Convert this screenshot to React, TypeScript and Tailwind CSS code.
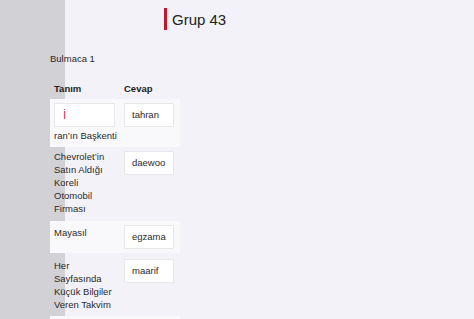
import React from 'react';

type Row = {
  lines: string[];
  cevap: string;
  first?: boolean;
  rowClass: string;
  textClass: string;
  boxClass: string;
};

const rows: Row[] = [
  {
    lines: ['ran’ın Başkenti'],
    cevap: 'tahran',
    first: true,
    rowClass: 'bg-[#f9f9fb] pt-[4px] pb-[5px]',
    textClass: 'mt-0',
    boxClass: 'mt-0',
  },
  {
    lines: ['Chevrolet’in', 'Satın Aldığı', 'Koreli', 'Otomobil', 'Firması'],
    cevap: 'daewoo',
    rowClass: 'pt-[3px] pb-[6px]',
    textClass: 'mt-0',
    boxClass: 'mt-[1px]',
  },
  {
    lines: ['Mayasıl'],
    cevap: 'egzama',
    rowClass: 'bg-[#f9f9fb] pt-[4px] pb-[4px]',
    textClass: 'mt-[1px]',
    boxClass: 'mt-0',
  },
  {
    lines: ['Her', 'Sayfasında', 'Küçük Bilgiler', 'Veren Takvim'],
    cevap: 'maarif',
    rowClass: 'pt-[6px] pb-[5px]',
    textClass: 'mt-0',
    boxClass: 'mt-0',
  },
];

export default function App() {
  return (
    <div className="min-h-screen bg-[linear-gradient(to_right,#d1d1d6_65px,#f2f2f8_65px)] font-['Liberation_Sans',Arial,sans-serif] text-[#2b2b2b]">
      {/* Header */}
      <div className="flex items-center pl-[164px] pt-[8px]">
        <div className="w-[3px] h-[22px] bg-[#c3172f]" />
        <h1 className="ml-[5px] text-[15px] text-[#222] leading-none">Grup 43</h1>
      </div>

      {/* Content */}
      <div className="pl-[50px] pt-[22px]">
        <p className="text-[9.5px] leading-[13px]">Bulmaca 1</p>

        <div className="mt-[17px] w-[130px]">
          <div className="flex px-[4px] pb-[4px] text-[9.5px] font-bold leading-[13px] text-[#222]">
            <span className="w-[70px]">Tanım</span>
            <span>Cevap</span>
          </div>

          {rows.map((row) => (
            <div key={row.cevap} className={`flex items-start px-[4px] ${row.rowClass}`}>
              <div className={`w-[62px] mr-[8px] text-[9.5px] leading-[13px] ${row.textClass}`}>
                {row.first && (
                  <div className="h-[24px] w-[61px] bg-white border border-[#e7e7ec] flex items-center pl-[8px] text-[11px] text-[#d42a3c] mb-[2px]">
                    İ
                  </div>
                )}
                {row.lines.map((line) => (
                  <div key={line} className="whitespace-nowrap">
                    {line}
                  </div>
                ))}
              </div>
              <div
                className={`h-[24px] w-[50px] bg-white border border-[#e7e7ec] flex items-center pl-[7px] text-[9.5px] text-[#2b2b2b] ${row.boxClass}`}
              >
                {row.cevap}
              </div>
            </div>
          ))}

          <div className="h-[10px] bg-[#f9f9fb]" />
        </div>
      </div>
    </div>
  );
}
